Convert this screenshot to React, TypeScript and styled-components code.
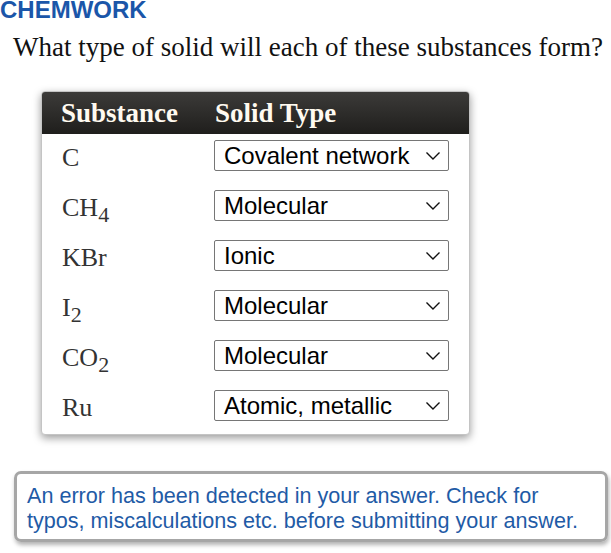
import React from "react";
import styled, { createGlobalStyle } from "styled-components";

const Global = createGlobalStyle`
  html, body { margin: 0; padding: 0; background: #ffffff; }
  body { width: 611px; height: 553px; overflow: hidden; }
`;

const Page = styled.div`
  display: flex;
  flex-direction: column;
  width: 611px;
`;

const Brand = styled.div`
  font-family: "Liberation Sans", Arial, sans-serif;
  font-weight: bold;
  font-size: 24px;
  line-height: 24px;
  color: #1b56a9;
  margin-top: -2px;
  height: 24px;
`;

const Question = styled.p`
  margin: 10px 0 0 13px;
  font-family: "Liberation Serif", "Times New Roman", serif;
  font-size: 27px;
  line-height: 30px;
  color: #111;
`;

const Card = styled.div`
  margin: 29px 0 0 41px;
  width: 427px;
  border: 1px solid #c4c4c4;
  border-radius: 4px;
  box-shadow: 0 3px 8px rgba(0, 0, 0, 0.4);
  background: #fff;
  overflow: hidden;
`;

const Grid = styled.div`
  display: grid;
  grid-template-columns: 172px 1fr;
`;

const Head = styled.div`
  grid-column: 1 / -1;
  display: grid;
  grid-template-columns: 172px 1fr;
  height: 42px;
  align-items: center;
  background: linear-gradient(#3c3b39, #1f1e1c);
  color: #fffaf0;
  font-family: "Liberation Serif", "Times New Roman", serif;
  font-weight: bold;
  font-size: 27px;
`;

const HeadCell = styled.div<{ $pad: number }>`
  padding-left: ${(p) => p.$pad}px;
`;

const Row = styled.div`
  grid-column: 1 / -1;
  display: grid;
  grid-template-columns: 172px 1fr;
  height: 50px;
  align-items: start;
`;

const Sub = styled.div`
  padding: 9px 0 0 20px;
  font-family: "Liberation Serif", "Times New Roman", serif;
  font-size: 26px;
  line-height: 30px;
  color: #333;
  sub {
    font-size: 22px;
    vertical-align: -6px;
    line-height: 0;
  }
`;

const SelectBox = styled.div`
  margin-top: 6px;
  width: 235px;
  height: 31px;
  box-sizing: border-box;
  border: 1px solid #767676;
  border-radius: 2px;
  display: flex;
  align-items: center;
  justify-content: space-between;
  padding: 0 7px 0 9px;
  font-family: "Liberation Sans", Arial, sans-serif;
  font-size: 24px;
  color: #000;
  background: #fff;
`;

const Chevron = () => (
  <svg width="16" height="10" viewBox="0 0 16 10">
    <path d="M1.5 1.5 L8 8 L14.5 1.5" fill="none" stroke="#111" strokeWidth="1.4" />
  </svg>
);

const ErrorBox = styled.div`
  margin: 36px 0 0 14px;
  width: 594px;
  box-sizing: border-box;
  border: 3px solid #a6a6a6;
  border-radius: 7px;
  box-shadow: 1px 3px 4px rgba(0, 0, 0, 0.3);
  padding: 9px 12px 6px 10px;
  font-family: "Liberation Sans", Arial, sans-serif;
  font-size: 21.6px;
  line-height: 25px;
  color: #1f5ba6;
`;

const rows: { sub: React.ReactNode; value: string }[] = [
  { sub: "C", value: "Covalent network" },
  { sub: <>CH<sub>4</sub></>, value: "Molecular" },
  { sub: "KBr", value: "Ionic" },
  { sub: <>I<sub>2</sub></>, value: "Molecular" },
  { sub: <>CO<sub>2</sub></>, value: "Molecular" },
  { sub: "Ru", value: "Atomic, metallic" },
];

export default function App() {
  return (
    <Page>
      <Global />
      <Brand>CHEMWORK</Brand>
      <Question>What type of solid will each of these substances form?</Question>
      <Card>
        <Grid>
          <Head>
            <HeadCell $pad={19}>Substance</HeadCell>
            <HeadCell $pad={1}>Solid Type</HeadCell>
          </Head>
          {rows.map((r, i) => (
            <Row key={i}>
              <Sub>{r.sub}</Sub>
              <SelectBox>
                <span>{r.value}</span>
                <Chevron />
              </SelectBox>
            </Row>
          ))}
        </Grid>
      </Card>
      <ErrorBox>
        An error has been detected in your answer. Check for typos, miscalculations etc. before submitting your answer.
      </ErrorBox>
    </Page>
  );
}
